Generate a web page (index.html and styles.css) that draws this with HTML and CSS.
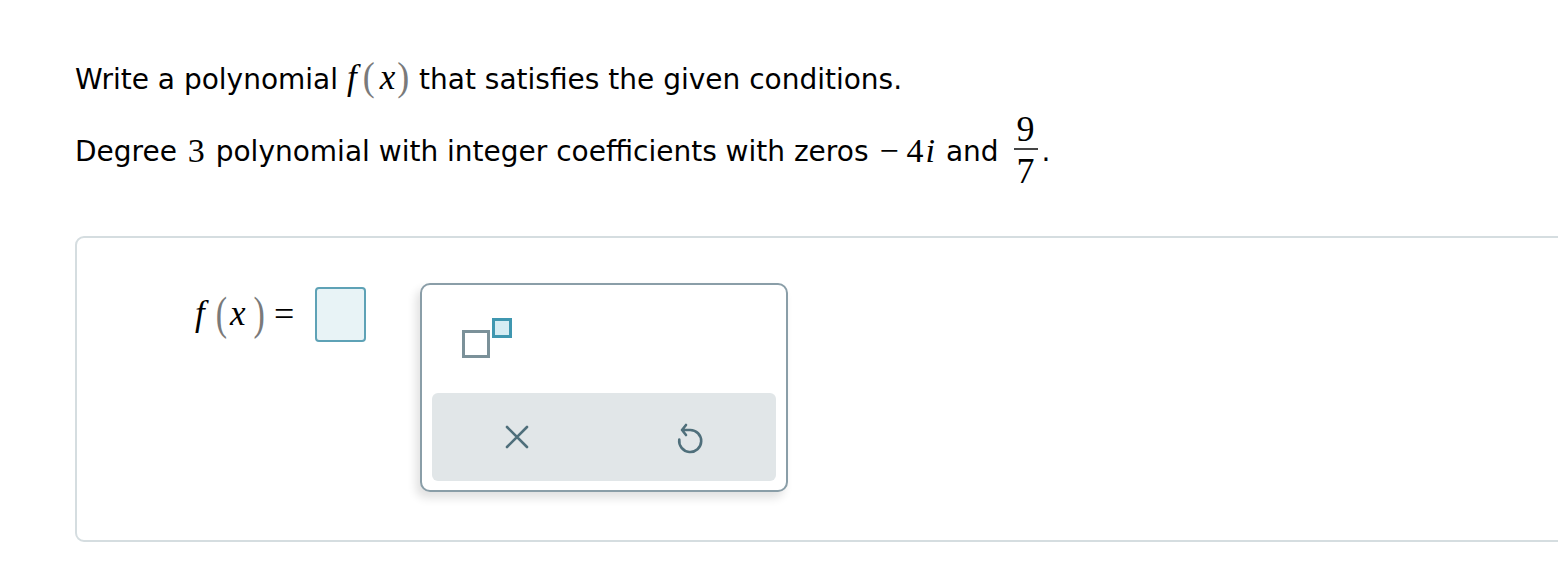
FILE: index.html
```html
<!DOCTYPE html>
<html>
<head>
<meta charset="utf-8">
<link rel="stylesheet" href="styles.css">
</head>
<body>
<div class="page">
  <p class="line1">Write a polynomial <span class="math"><span class="mi f1">f</span><span class="paren p-open">(</span><span class="mi">x</span><span class="paren p-close">)</span></span> that satisfies the given conditions.</p>
  <p class="line2">Degree <span class="mn">3</span> polynomial with integer coefficients with zeros <span class="mn neg"><span class="minus">&minus;</span>4<span class="mi">i</span></span> and <span class="frac"><span class="num">9</span><span class="den">7</span></span>.</p>
  <div class="answer">
    <div class="row">
      <div class="lhs"><span class="mi lf">f</span><span class="paren2">(</span><span class="mi">x</span><span class="paren2">)</span><span class="eq">=</span></div>
      <div class="input"></div>
      <div class="palette">
        <div class="tools">
          <svg class="sup" width="52" height="42" viewBox="0 0 52 42">
            <rect x="1.5" y="13.5" width="25" height="25" fill="#fff" stroke="#7b9199" stroke-width="3"/>
            <rect x="31.5" y="1.5" width="17" height="17" fill="#d5ecf3" stroke="#3f97b0" stroke-width="3"/>
          </svg>
        </div>
        <div class="actions">
          <svg class="icon" width="40" height="45" viewBox="0 0 40 45">
            <path d="M10 12 L30 32 M30 12 L10 32" stroke="#4f6f7b" stroke-width="2.6" stroke-linecap="round" fill="none"/>
          </svg>
          <svg class="icon" width="40" height="45" viewBox="0 0 40 45">
            <path d="M15 10 L11 15 L15 20 M11 15 H19 A11 11 0 1 1 8.3 24.5" stroke="#4f6f7b" stroke-width="2.6" stroke-linecap="round" stroke-linejoin="round" fill="none"/>
          </svg>
        </div>
      </div>
    </div>
  </div>
</div>
</body>
</html>
```

FILE: styles.css
```css
html, body {
  margin: 0;
  padding: 0;
  background: #fff;
}
body {
  font-family: "DejaVu Sans", Verdana, sans-serif;
  color: #000;
  overflow: hidden;
}
.page {
  padding: 57px 0 0 75px;
  font-size: 28px;
}
.line1 {
  margin: 0;
  line-height: 40px;
  height: 40px;
  white-space: nowrap;
}
.line2 {
  margin: 15px 0 0 0;
  display: flex;
  align-items: center;
  white-space: pre;
  height: 78px;
}
.math {
  white-space: nowrap;
}
.mi {
  font-family: "Liberation Serif", "Times New Roman", serif;
  font-style: italic;
  font-size: 34px;
}
.math .mi {
  font-size: 35px;
}
.mn {
  font-family: "Liberation Serif", "Times New Roman", serif;
  font-size: 34px;
  margin: 0 2px;
}
.minus {
  margin-right: 8px;
  font-size: 34px;
}
.mn .mi {
  font-size: 34px;
  margin-left: 2px;
}
.paren {
  font-family: "Liberation Serif", "Times New Roman", serif;
  font-size: 36px;
  color: #7a7a7a;
  display: inline-block;
  transform: scaleY(1.1);
}
.p-open {
  margin: 0 5px 0 6px;
}
.p-close {
  margin: 0 1px 0 2px;
}
.frac {
  display: inline-flex;
  flex-direction: column;
  align-items: center;
  font-family: "Liberation Serif", "Times New Roman", serif;
  font-size: 36px;
  margin: 0 4px 0 6px;
}
.num {
  border-bottom: 2px solid #444;
  padding: 0 3px;
  line-height: 38px;
}
.den {
  line-height: 42px;
}
.answer {
  margin-top: 46px;
  width: 1520px;
  height: 302px;
  border: 2px solid #d5dde0;
  border-radius: 9px;
  box-sizing: content-box;
}
.row {
  display: flex;
  align-items: flex-start;
  padding: 45px 0 0 118px;
}
.lhs {
  display: flex;
  align-items: center;
  height: 56px;
  margin-top: 3px;
  font-family: "Liberation Serif", "Times New Roman", serif;
  font-size: 34px;
}
.lhs .mi {
  font-size: 35px;
}
.lhs .lf {
  margin-right: 3px;
}
.paren2 {
  font-size: 34px;
  color: #7a7a7a;
  display: inline-block;
  transform: scaleY(1.35);
  margin: 0 3px 0 8px;
}
.eq {
  margin-left: 6px;
  font-size: 36px;
}
.input {
  width: 47px;
  height: 51px;
  margin-left: 21px;
  margin-top: 4px;
  border: 2px solid #5ea2b6;
  background: #e8f3f6;
  border-radius: 4px;
}
.palette {
  margin-left: 54px;
  width: 364px;
  height: 205px;
  border: 2px solid #8a9ea8;
  border-radius: 10px;
  background: #fff;
  box-shadow: -4px 6px 10px rgba(0, 0, 0, 0.12);
  display: flex;
  flex-direction: column;
}
.tools {
  height: 108px;
  padding: 33px 0 0 40px;
  box-sizing: border-box;
}
.actions {
  margin: 0 10px;
  height: 88px;
  background: #e1e6e8;
  border-radius: 6px;
  display: flex;
  align-items: center;
  padding: 0 65px;
  justify-content: space-between;
}
.icon {
  display: block;
}
```
